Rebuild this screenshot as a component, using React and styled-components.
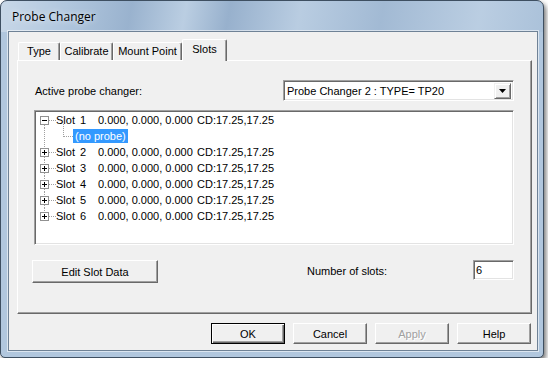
import React from 'react'
import styled, { createGlobalStyle } from 'styled-components'

const GlobalStyle = createGlobalStyle`
  html, body {
    margin: 0;
    padding: 0;
    background: #fff;
  }
  body {
    font-family: "Liberation Sans", Arial, sans-serif;
    font-size: 11px;
    color: #000;
  }
`;

const Window = styled.div`
  box-sizing: border-box;
  width: 544px;
  height: 358px;
  border: 1px solid #3e4f61;
  border-radius: 7px 7px 5px 5px;
  padding: 0 5px 6px 7px;
  display: flex;
  flex-direction: column;
  background:
    linear-gradient(100deg, rgba(255,255,255,0.3) 0%, rgba(255,255,255,0) 12%, rgba(70,105,150,0.22) 24%, rgba(255,255,255,0.12) 34%, rgba(70,105,150,0.24) 42%, rgba(255,255,255,0.1) 55%, rgba(70,105,150,0.14) 70%, rgba(255,255,255,0.12) 88%, rgba(70,105,150,0.06) 100%) top / 100% 31px no-repeat,
    #b1c7de;
  box-shadow: 2px 3px 5px rgba(0, 0, 0, 0.55);
`;

const TitleBar = styled.div`
  height: 30px;
  display: flex;
  align-items: center;
  padding-left: 4px;
  font-family: "Open Sans", "Noto Sans", sans-serif;
  font-size: 12px;
  color: #000;
  text-shadow: 0 0 6px rgba(255, 255, 255, 0.9);
`;

const Client = styled.div`
  flex: 1;
  border: 1px solid #6f8296;
  box-shadow: 0 0 0 1px rgba(255, 255, 255, 0.55);
  background: #f0f0f0;
  padding: 7px 5px 0 8px;
  display: flex;
  flex-direction: column;
`;

const TabRow = styled.div`
  display: flex;
  align-items: flex-end;
  height: 21px;
  padding-left: 1px;
`;

const Tab = styled.div`
  box-sizing: border-box;
  width: ${p => p.$w}px;
  height: ${p => (p.$active ? 22 : 18)}px;
  margin-bottom: ${p => (p.$active ? -1 : 0)}px;
  position: relative;
  z-index: ${p => (p.$active ? 1 : 0)};
  background: #f0f0f0;
  border-top: 1px solid #fff;
  border-left: 1px solid #fff;
  border-right: 1px solid #696969;
  border-radius: 2px 2px 0 0;
  box-shadow: inset -1px 0 0 #a0a0a0;
  display: flex;
  justify-content: center;
  padding-top: ${p => (p.$active ? 3 : 2)}px;
  font-size: 11px;
`;

const Panel = styled.div`
  box-sizing: border-box;
  height: 254px;
  border-top: 1px solid #fff;
  border-left: 1px solid #fff;
  border-right: 1px solid #696969;
  border-bottom: 1px solid #696969;
  box-shadow: inset -1px -1px 0 #a0a0a0;
  padding: 19px 17px 0 16px;
  display: flex;
  flex-direction: column;
`;

const ChangerRow = styled.div`
  display: flex;
  align-items: center;
  justify-content: space-between;
  height: 21px;
`;

const Label = styled.span`
  padding-left: ${p => p.$pad || 0}px;
  white-space: nowrap;
`;

const Sunken = styled.div`
  box-sizing: border-box;
  background: #fff;
  border: 1px solid;
  border-color: #a0a0a0 #fff #fff #a0a0a0;
  box-shadow: inset 1px 1px 0 #696969, inset -1px -1px 0 #e3e3e3;
`;

const Combo = styled(Sunken)`
  width: 231px;
  height: 21px;
  display: flex;
  align-items: center;
  justify-content: space-between;
  padding: 0 2px 0 3px;
`;

const DropButton = styled.div`
  box-sizing: border-box;
  width: 17px;
  height: 16px;
  background: #f0f0f0;
  border: 1px solid;
  border-color: #f0f0f0 #696969 #696969 #f0f0f0;
  box-shadow: inset 1px 1px 0 #fff, inset -1px -1px 0 #a0a0a0;
  display: flex;
  align-items: center;
  justify-content: center;
`;

const Tree = styled(Sunken)`
  margin-top: 9px;
  width: 480px;
  height: 135px;
  padding: 1px 0 0 1px;
`;

const TreeRow = styled.div`
  display: flex;
  align-items: center;
  height: 16px;
  white-space: nowrap;
`;

const Gutter = styled.svg`
  flex: none;
  overflow: visible;
  display: block;
`;

const Cell = styled.span`
  display: inline-block;
  width: ${p => p.$w}px;
`;

const Selected = styled.span`
  background: #3399ff;
  color: #fff;
  line-height: 14px;
  padding: 0 2px 0 2px;
`;

const BottomRow = styled.div`
  display: flex;
  align-items: flex-start;
  margin-top: 15px;
`;

const Button = styled.button`
  box-sizing: border-box;
  width: ${p => p.$w || 74}px;
  height: ${p => p.$h || 21}px;
  margin: 0 0 0 ${p => p.$shift || 0}px;
  padding: 0;
  font-family: "Liberation Sans", Arial, sans-serif;
  font-size: 11px;
  color: ${p => (p.$disabled ? '#a0a0a0' : '#000')};
  text-shadow: ${p => (p.$disabled ? '1px 1px 0 #fff' : 'none')};
  background: #f0f0f0;
  border: 1px solid;
  border-color: ${p => (p.$default ? '#000' : '#fff #696969 #696969 #fff')};
  box-shadow: ${p =>
    p.$default
      ? 'inset 1px 1px 0 #fff, inset -1px -1px 0 #696969, inset -2px -2px 0 #a0a0a0'
      : 'inset -1px -1px 0 #a0a0a0'};
`;

const SlotsLabel = styled.span`
  margin-left: 149px;
  line-height: 23px;
  white-space: nowrap;
`;

const NumberInput = styled(Sunken)`
  margin-left: auto;
  width: 41px;
  height: 20px;
  padding: 3px 0 0 2px;
  line-height: 13px;
`;

const ButtonBar = styled.div`
  display: flex;
  justify-content: flex-end;
  gap: 8px;
  margin-top: 9px;
  padding-right: 1px;
`;

const dot = { stroke: '#a0a0a0', strokeDasharray: '1 1', shapeRendering: 'crispEdges' };

const Expander = ({ open, up = true, down = true }) => (
  <Gutter width="20" height="16" viewBox="0 0 20 16">
    {up && <line x1="8.5" y1="0" x2="8.5" y2="4" {...dot} />}
    {down && <line x1="8.5" y1="13" x2="8.5" y2="16" {...dot} />}
    <line x1="13" y1="8.5" x2="20" y2="8.5" {...dot} />
    <rect x="4.5" y="4.5" width="8" height="8" fill="#fff" stroke="#919191" shapeRendering="crispEdges" />
    <rect x="6" y="8" width="5" height="1" fill="#000" />
    {!open && <rect x="8" y="6" width="1" height="5" fill="#000" />}
  </Gutter>
);

const ChildLines = () => (
  <Gutter width="37" height="16" viewBox="0 0 37 16">
    <line x1="8.5" y1="0" x2="8.5" y2="16" {...dot} />
    <line x1="27.5" y1="-4" x2="27.5" y2="9" {...dot} />
    <line x1="28" y1="8.5" x2="37" y2="8.5" {...dot} />
  </Gutter>
);

const slots = [1, 2, 3, 4, 5, 6];

const SlotText = ({ n }) => (
  <>
    <Cell $w={24}>Slot</Cell>
    <Cell $w={18}>{n}</Cell>
    <Cell $w={99}>0.000, 0.000, 0.000</Cell>
    <span>CD:17.25,17.25</span>
  </>
);

const App = () => {
  return (
    <>
      <GlobalStyle />
      <Window>
        <TitleBar>Probe Changer</TitleBar>
        <Client>
          <TabRow>
            <Tab $w={42}>Type</Tab>
            <Tab $w={53}>Calibrate</Tab>
            <Tab $w={69}>Mount Point</Tab>
            <Tab $w={45} $active>Slots</Tab>
          </TabRow>
          <Panel>
            <ChangerRow>
              <Label $pad={1}>Active probe changer:</Label>
              <Combo>
                <span>Probe Changer 2 : TYPE= TP20</span>
                <DropButton>
                  <svg width="7" height="4" viewBox="0 0 7 4">
                    <path d="M0 0h7L3.5 4z" fill="#000" />
                  </svg>
                </DropButton>
              </Combo>
            </ChangerRow>
            <Tree>
              {slots.map(n => (
                <React.Fragment key={n}>
                  <TreeRow>
                    <Expander open={n === 1} up={n !== 1} down={n !== 6} />
                    <SlotText n={n} />
                  </TreeRow>
                  {n === 1 && (
                    <TreeRow>
                      <ChildLines />
                      <Selected>(no probe)</Selected>
                    </TreeRow>
                  )}
                </React.Fragment>
              ))}
            </Tree>
            <BottomRow>
              <Button $w={126} $h={23} $shift={-2}>Edit Slot Data</Button>
              <SlotsLabel>Number of slots:</SlotsLabel>
              <NumberInput>6</NumberInput>
            </BottomRow>
          </Panel>
          <ButtonBar>
            <Button $default>OK</Button>
            <Button>Cancel</Button>
            <Button $disabled>Apply</Button>
            <Button>Help</Button>
          </ButtonBar>
        </Client>
      </Window>
    </>
  )
}

export default App
